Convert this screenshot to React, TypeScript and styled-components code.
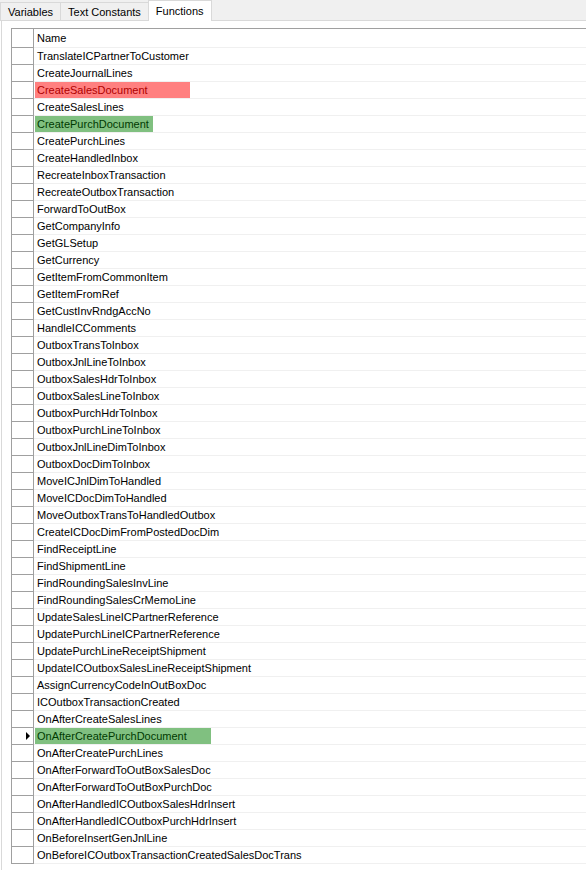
import React from 'react';
import styled, { createGlobalStyle } from 'styled-components';

const GlobalStyle = createGlobalStyle`
  html, body {
    margin: 0;
    padding: 0;
    background: #ffffff;
  }
  body {
    font-family: "Liberation Sans", Arial, sans-serif;
    font-size: 11px;
    color: #000000;
  }
`;

type Mark = 'red' | 'green';

interface FunctionRow {
  name: string;
  mark?: Mark;
  markWidth?: number;
  current?: boolean;
}

const functions: FunctionRow[] = [
  { name: 'TranslateICPartnerToCustomer' },
  { name: 'CreateJournalLines' },
  { name: 'CreateSalesDocument', mark: 'red', markWidth: 155 },
  { name: 'CreateSalesLines' },
  { name: 'CreatePurchDocument', mark: 'green', markWidth: 118 },
  { name: 'CreatePurchLines' },
  { name: 'CreateHandledInbox' },
  { name: 'RecreateInboxTransaction' },
  { name: 'RecreateOutboxTransaction' },
  { name: 'ForwardToOutBox' },
  { name: 'GetCompanyInfo' },
  { name: 'GetGLSetup' },
  { name: 'GetCurrency' },
  { name: 'GetItemFromCommonItem' },
  { name: 'GetItemFromRef' },
  { name: 'GetCustInvRndgAccNo' },
  { name: 'HandleICComments' },
  { name: 'OutboxTransToInbox' },
  { name: 'OutboxJnlLineToInbox' },
  { name: 'OutboxSalesHdrToInbox' },
  { name: 'OutboxSalesLineToInbox' },
  { name: 'OutboxPurchHdrToInbox' },
  { name: 'OutboxPurchLineToInbox' },
  { name: 'OutboxJnlLineDimToInbox' },
  { name: 'OutboxDocDimToInbox' },
  { name: 'MoveICJnlDimToHandled' },
  { name: 'MoveICDocDimToHandled' },
  { name: 'MoveOutboxTransToHandledOutbox' },
  { name: 'CreateICDocDimFromPostedDocDim' },
  { name: 'FindReceiptLine' },
  { name: 'FindShipmentLine' },
  { name: 'FindRoundingSalesInvLine' },
  { name: 'FindRoundingSalesCrMemoLine' },
  { name: 'UpdateSalesLineICPartnerReference' },
  { name: 'UpdatePurchLineICPartnerReference' },
  { name: 'UpdatePurchLineReceiptShipment' },
  { name: 'UpdateICOutboxSalesLineReceiptShipment' },
  { name: 'AssignCurrencyCodeInOutBoxDoc' },
  { name: 'ICOutboxTransactionCreated' },
  { name: 'OnAfterCreateSalesLines' },
  { name: 'OnAfterCreatePurchDocument', mark: 'green', markWidth: 176, current: true },
  { name: 'OnAfterCreatePurchLines' },
  { name: 'OnAfterForwardToOutBoxSalesDoc' },
  { name: 'OnAfterForwardToOutBoxPurchDoc' },
  { name: 'OnAfterHandledICOutboxSalesHdrInsert' },
  { name: 'OnAfterHandledICOutboxPurchHdrInsert' },
  { name: 'OnBeforeInsertGenJnlLine' },
  { name: 'OnBeforeICOutboxTransactionCreatedSalesDocTrans' },
];

const markColors: Record<Mark, { bg: string; fg: string }> = {
  red: { bg: '#ff8080', fg: '#b00000' },
  green: { bg: '#80c080', fg: '#003a00' },
};

const Window = styled.div`
  width: 586px;
  height: 870px;
  display: flex;
  flex-direction: column;
  overflow: hidden;
  background: #ffffff;
`;

const TabStrip = styled.div`
  display: flex;
  align-items: flex-end;
  height: 21px;
  background: #f0f0f0;
`;

const Tab = styled.div<{ $active?: boolean }>`
  box-sizing: border-box;
  height: ${(p) => (p.$active ? '21px' : '19px')};
  padding: 0 7px;
  padding-top: ${(p) => (p.$active ? '0' : '1px')};
  display: flex;
  align-items: center;
  border: 1px solid #d9d9d9;
  border-bottom: ${(p) => (p.$active ? 'none' : '1px solid #d9d9d9')};
  margin-left: -1px;
  background: ${(p) => (p.$active ? '#ffffff' : '#f0f0f0')};
  white-space: nowrap;
  &:first-child {
    margin-left: 0;
  }
`;

const TabFiller = styled.div`
  flex: 1;
  height: 19px;
  box-sizing: border-box;
  border-bottom: 1px solid #d9d9d9;
`;

const TabPanel = styled.div`
  flex: 1;
  border-left: 1px solid #d9d9d9;
  margin-left: 1px;
  padding: 7px 0 0 9px;
  background: #ffffff;
`;

const Grid = styled.div`
  border-top: 1px solid #a0a0a0;
  border-left: 1px solid #a0a0a0;
`;

const Row = styled.div<{ $header?: boolean }>`
  display: flex;
  height: ${(p) => (p.$header ? '19px' : '17px')};
`;

const Selector = styled.div`
  box-sizing: border-box;
  width: 22px;
  flex: none;
  border-right: 1px solid #a0a0a0;
  border-bottom: 1px solid #a0a0a0;
  display: flex;
  align-items: center;
  justify-content: flex-end;
  padding-right: 3px;
`;

const Arrow = styled.span`
  width: 0;
  height: 0;
  border-top: 4px solid transparent;
  border-bottom: 4px solid transparent;
  border-left: 4px solid #000000;
`;

const NameCell = styled.div<{ $header?: boolean }>`
  flex: 1;
  box-sizing: border-box;
  border-bottom: 1px solid #f0f0f0;
  padding-left: 1px;
  display: flex;
  align-items: ${(p) => (p.$header ? 'center' : 'flex-end')};
  white-space: nowrap;
`;

const Label = styled.span<{ $mark?: Mark; $width?: number }>`
  display: block;
  box-sizing: border-box;
  height: 16px;
  line-height: 17px;
  padding-left: 2px;
  width: ${(p) => (p.$width ? `${p.$width}px` : 'auto')};
  background: ${(p) => (p.$mark ? markColors[p.$mark].bg : 'transparent')};
  color: ${(p) => (p.$mark ? markColors[p.$mark].fg : '#000000')};
`;

const App: React.FC = () => (
  <>
    <GlobalStyle />
    <Window>
      <TabStrip>
        <Tab>Variables</Tab>
        <Tab>Text Constants</Tab>
        <Tab $active>Functions</Tab>
        <TabFiller />
      </TabStrip>
      <TabPanel>
        <Grid>
          <Row $header>
            <Selector />
            <NameCell $header>
              <Label>Name</Label>
            </NameCell>
          </Row>
          {functions.map((fn) => (
            <Row key={fn.name}>
              <Selector>{fn.current && <Arrow />}</Selector>
              <NameCell>
                <Label $mark={fn.mark} $width={fn.markWidth}>
                  {fn.name}
                </Label>
              </NameCell>
            </Row>
          ))}
        </Grid>
      </TabPanel>
    </Window>
  </>
);

export default App;
